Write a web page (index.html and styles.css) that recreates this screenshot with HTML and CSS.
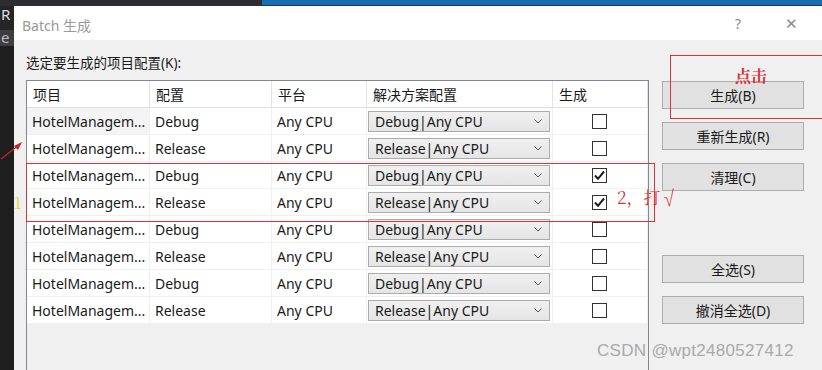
FILE: index.html
```html
<!DOCTYPE html>
<html lang="zh-CN">
<head>
    <meta charset="UTF-8">
    <title>Batch 生成</title>
    <link rel="stylesheet" href="styles.css">
</head>
<body>
    <div class="topbar">
        <div class="topbar-dark"></div>
        <div class="topbar-blue"></div>
    </div>

    <div class="screen">
        <div class="side">
            <span class="side-r">R</span>
            <span class="side-e">e</span>
        </div>

        <div class="dialog">
            <div class="titlebar">
                <span class="title">Batch 生成</span>
                <span class="help">?</span>
                <span class="close">&#x2715;</span>
            </div>

            <div class="dialog-body">
                <div class="main">
                    <div class="caption">选定要生成的项目配置(K):</div>
                    <div class="list">
                        <div class="row head">
                            <div class="cell">项目</div>
                            <div class="cell">配置</div>
                            <div class="cell">平台</div>
                            <div class="cell">解决方案配置</div>
                            <div class="cell">生成</div>
                        </div>
                        <div id="rows"></div>
                    </div>
                </div>

                <div class="buttons">
                    <button class="btn">生成(B)</button>
                    <button class="btn">重新生成(R)</button>
                    <button class="btn">清理(C)</button>
                    <div class="spacer"></div>
                    <button class="btn">全选(S)</button>
                    <button class="btn">撤消全选(D)</button>
                </div>
            </div>
        </div>
    </div>

    <!-- annotations drawn on top of the screenshot -->
    <div class="mark mark-build"></div>
    <div class="note note-click">点击</div>
    <div class="mark mark-rows"></div>
    <div class="note note-check">2，打√</div>
    <div class="note note-one">1</div>
    <svg class="arrow" width="24" height="24" viewBox="0 0 24 24">
        <line x1="1" y1="22" x2="19" y2="8" stroke="#c0262b" stroke-width="1.3"/>
        <polygon points="22,5 14,9 18,13" fill="#c0262b"/>
    </svg>

    <div class="watermark">CSDN @wpt2480527412</div>

    <script>
        var data = [
            ["Debug", "Debug|Any CPU", false],
            ["Release", "Release|Any CPU", false],
            ["Debug", "Debug|Any CPU", true],
            ["Release", "Release|Any CPU", true],
            ["Debug", "Debug|Any CPU", false],
            ["Release", "Release|Any CPU", false],
            ["Debug", "Debug|Any CPU", false],
            ["Release", "Release|Any CPU", false]
        ];

        var html = "";
        for (var i = 0; i < data.length; i++) {
            var d = data[i];
            html += '<div class="row' + (i === 0 ? ' first' : '') + '">' +
                '<div class="cell">HotelManagem...</div>' +
                '<div class="cell">' + d[0] + '</div>' +
                '<div class="cell">Any CPU</div>' +
                '<div class="cell"><div class="combo"><span>' + d[1] + '</span>' +
                '<svg width="8" height="5" viewBox="0 0 8 5"><polyline points="0.5,0.5 4,4 7.5,0.5" fill="none" stroke="#555" stroke-width="1"/></svg></div></div>' +
                '<div class="cell center"><span class="check' + (d[2] ? ' on' : '') + '">' +
                (d[2] ? '<svg width="13" height="13" viewBox="0 0 13 13"><polyline points="2,6.5 5,9.8 11,2.5" fill="none" stroke="#1a1a1a" stroke-width="2"/></svg>' : '') +
                '</span></div>' +
                '</div>';
        }
        document.getElementById("rows").innerHTML = html;
    </script>
</body>
</html>
```

FILE: styles.css
```css
body {
    margin: 0;
    background-color: #1e1e1e;
    font-family: "Noto Sans", "Noto Sans CJK SC", sans-serif;
    font-size: 14px;
    color: #1a1a1a;
    width: 822px;
    height: 370px;
    overflow: hidden;
    position: relative;
}

.topbar {
    display: flex;
    height: 6px;
}

.topbar-dark {
    width: 262px;
    background-color: #2d2d30;
}

.topbar-blue {
    flex: 1;
    background-color: #1c6cb0;
    border-bottom: 1px solid #14385a;
}

.screen {
    display: flex;
    height: 364px;
}

.side {
    width: 14px;
    flex: none;
    background-color: #1e1e1e;
    color: #ddd;
    font-size: 15px;
}

.side-r {
    display: block;
    height: 24px;
    line-height: 16px;
    padding-left: 1px;
    background-color: #252526;
}

.side-e {
    display: block;
    height: 16px;
    line-height: 14px;
    padding-left: 1px;
    background-color: #3e3e42;
    color: #bbb;
}

.dialog {
    flex: 1;
    background-color: #f0f0f0;
    display: flex;
    flex-direction: column;
    overflow: hidden;
}

.titlebar {
    flex: none;
    height: 34px;
    background-color: #fff;
    display: flex;
    align-items: center;
}

.title {
    margin-left: 8px;
    margin-top: 3px;
    color: #999;
    font-size: 14px;
}

.help {
    margin-left: auto;
    color: #888;
    font-size: 14px;
}

.close {
    margin-left: 44px;
    margin-right: 24px;
    color: #888;
    font-size: 15px;
}

.dialog-body {
    display: flex;
    padding-left: 12px;
}

.main {
    width: 623px;
}

.caption {
    margin-top: 15px;
    height: 25px;
    line-height: 17px;
    font-size: 13.5px;
}

.list {
    border: 1px solid #828790;
    border-bottom: none;
    height: 300px;
    background-color: #f0f0f0;
}

.row {
    display: grid;
    grid-template-columns: 123px 122px 95px 186px 95px;
    height: 27px;
    background-color: #fff;
    border-bottom: 1px solid #f0f0f0;
    box-sizing: border-box;
}

.row.head {
    height: 27px;
    border-bottom: 1px solid #e0e0e0;
}

.cell {
    display: flex;
    align-items: center;
    padding-left: 5px;
    border-right: 1px solid #f0f0f0;
    white-space: nowrap;
    overflow: hidden;
}

.head .cell {
    border-right: 1px solid #e3e3e3;
    padding-left: 6px;
}

.row.first .cell:first-child {
    background-color: #f4f4f4;
}

.cell.center {
    justify-content: center;
    padding-left: 0;
    padding-right: 2px;
}

.combo {
    width: 182px;
    height: 21px;
    margin-left: -4px;
    box-sizing: border-box;
    border: 1px solid #acacac;
    background: linear-gradient(#f0f0f0, #e5e5e5);
    display: flex;
    align-items: center;
    justify-content: space-between;
    padding: 0 7px 0 6px;
}

.check {
    width: 13px;
    height: 13px;
    border: 1px solid #333;
    background-color: #fff;
    display: flex;
    align-items: center;
    justify-content: center;
}

.check svg {
    flex: none;
}

.buttons {
    margin-left: 13px;
    margin-top: 41px;
    display: flex;
    flex-direction: column;
    gap: 13px;
}

.spacer {
    height: 38px;
}

.btn {
    width: 142px;
    height: 28px;
    background-color: #e1e1e1;
    border: 1px solid #adadad;
    font-family: "Noto Sans", "Noto Sans CJK SC", sans-serif;
    font-size: 14px;
    color: #1a1a1a;
    padding: 0;
}

.mark {
    position: absolute;
    border: 1px solid #d9343a;
}

.mark-build {
    left: 670px;
    top: 55px;
    width: 160px;
    height: 62px;
}

.mark-rows {
    left: 26px;
    top: 163px;
    width: 627px;
    height: 57px;
}

.note {
    position: absolute;
    color: #d9343a;
    font-family: "Noto Serif CJK SC", "Liberation Serif", serif;
}

.note-click {
    left: 735px;
    top: 66px;
    font-size: 16px;
    font-weight: bold;
    line-height: 20px;
}

.note-check {
    left: 617px;
    top: 184px;
    font-size: 17px;
}

.note-one {
    left: 14px;
    top: 191px;
    color: #e6d23a;
    font-size: 16px;
}

.arrow {
    position: absolute;
    left: 0;
    top: 137px;
}

.watermark {
    position: absolute;
    left: 597px;
    top: 341px;
    font-family: "Liberation Sans", sans-serif;
    font-size: 17px;
    color: #a9a9a9;
    letter-spacing: 0.3px;
}
```
